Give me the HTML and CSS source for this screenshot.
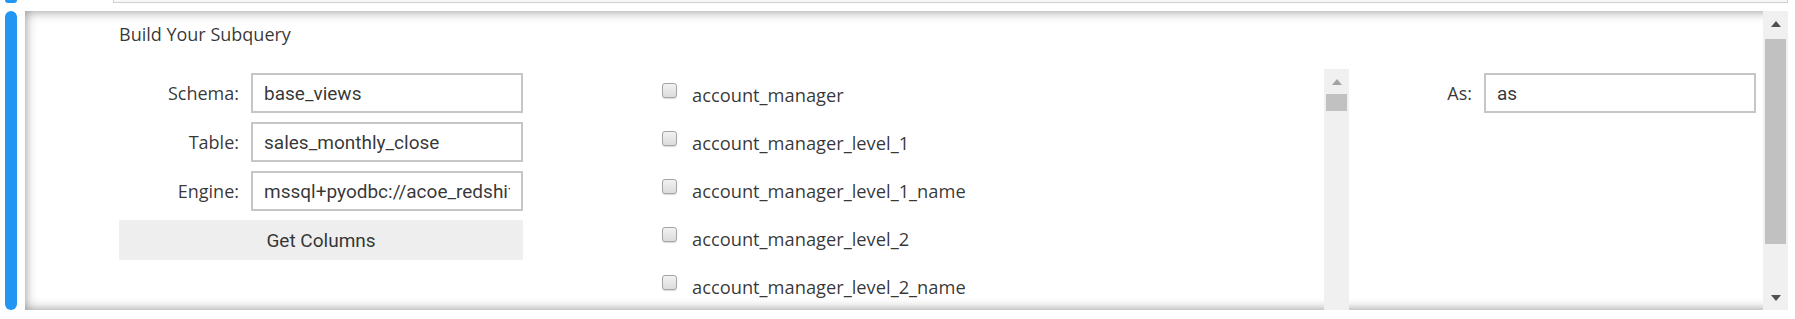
FILE: index.html
```html
<!DOCTYPE html>
<html lang="en">
<head>
    <meta charset="UTF-8">
    <title>Build Your Subquery</title>
    <link rel="stylesheet" href="styles.css">
</head>
<body>
    <div class="prev-cell">
        <div class="prev-bar"></div>
        <div class="prev-input"></div>
    </div>

    <div class="cell">
        <div class="cell-bar"></div>
        <div class="output-scroll">
            <div class="output-body">
                <div class="title">Build Your Subquery</div>
                <div class="builder">
                    <div class="source">
                        <div class="field">
                            <label class="field-label">Schema:</label>
                            <input type="text" class="field-input" value="base_views">
                        </div>
                        <div class="field">
                            <label class="field-label">Table:</label>
                            <input type="text" class="field-input" value="sales_monthly_close">
                        </div>
                        <div class="field">
                            <label class="field-label">Engine:</label>
                            <input type="text" class="field-input" value="mssql+pyodbc://acoe_redshift">
                        </div>
                        <button class="get-columns">Get Columns</button>
                    </div>

                    <div class="columns">
                        <div class="column-list">
                            <label class="column-item"><input type="checkbox" class="column-check"><span>account_manager</span></label>
                            <label class="column-item"><input type="checkbox" class="column-check"><span>account_manager_level_1</span></label>
                            <label class="column-item"><input type="checkbox" class="column-check"><span>account_manager_level_1_name</span></label>
                            <label class="column-item"><input type="checkbox" class="column-check"><span>account_manager_level_2</span></label>
                            <label class="column-item"><input type="checkbox" class="column-check"><span>account_manager_level_2_name</span></label>
                        </div>
                        <div class="scrollbar">
                            <div class="scroll-btn"><span class="arrow-up arrow-dim"></span></div>
                            <div class="scroll-thumb thumb-small"></div>
                        </div>
                    </div>

                    <div class="alias">
                        <label class="field-label alias-label">As:</label>
                        <input type="text" class="field-input" value="as">
                    </div>
                </div>
            </div>

            <div class="scrollbar">
                <div class="scroll-btn"><span class="arrow-up"></span></div>
                <div class="scroll-thumb thumb-page"></div>
                <div class="scroll-space"></div>
                <div class="scroll-btn"><span class="arrow-down"></span></div>
            </div>
        </div>
    </div>
</body>
</html>
```

FILE: styles.css
```css
body {
    margin: 0;
    width: 1795px;
    height: 319px;
    overflow: hidden;
    background: #fff;
    font-family: "Open Sans", sans-serif;
    color: rgba(0, 0, 0, 0.8);
}
.prev-cell {
    display: flex;
    height: 3px;
}
.prev-bar {
    margin-left: 5px;
    width: 12px;
    background: #2196f3;
    border-radius: 0 0 3px 3px;
}
.prev-input {
    margin-left: 96px;
    width: 1675px;
    box-sizing: border-box;
    background: #f7f7f7;
    border: 1px solid #d0d0d0;
    border-top: none;
}
.cell {
    display: flex;
    margin-top: 8px;
    height: 299px;
}
.cell-bar {
    margin-left: 5px;
    width: 12px;
    background: #2196f3;
    border-radius: 6px;
}
.output-scroll {
    margin-left: 8px;
    width: 1763px;
    display: flex;
    overflow: hidden;
    box-shadow: inset 0 0 12px rgba(0, 0, 0, 0.45);
}
.output-body {
    flex: 1;
    min-width: 0;
    padding: 9px 7px 0 94px;
}
.title {
    font-size: 18px;
    line-height: 28px;
}
.builder {
    display: flex;
    align-items: flex-start;
    margin-top: 21px;
}
.source {
    width: 404px;
    display: flex;
    flex-direction: column;
    gap: 9px;
    padding-top: 4px;
}
.field {
    display: flex;
    align-items: center;
    height: 40px;
}
.field-label {
    width: 120px;
    margin-right: 12px;
    text-align: right;
    font-size: 18px;
}
.field-input {
    width: 272px;
    height: 40px;
    box-sizing: border-box;
    margin: 0;
    padding: 0 11px;
    border: 2px solid #c6c6c6;
    font-family: Roboto, sans-serif;
    font-size: 19px;
    color: rgba(0, 0, 0, 0.8);
    outline: none;
}
.get-columns {
    height: 40px;
    border: none;
    border-radius: 2px;
    background: #eeeeee;
    font-family: Roboto, sans-serif;
    font-size: 19px;
    color: rgba(0, 0, 0, 0.8);
}
.columns {
    margin-left: 127px;
    width: 699px;
    height: 260px;
    display: flex;
}
.column-list {
    flex: 1;
    display: flex;
    flex-direction: column;
    gap: 6px;
}
.column-item {
    height: 42px;
    box-sizing: border-box;
    display: flex;
    align-items: center;
    padding: 9px 0 0 12px;
    font-size: 18.3px;
}
.column-check {
    appearance: none;
    margin: 0 15px 8px 0;
    width: 15px;
    height: 15px;
    box-sizing: border-box;
    border: 1px solid #a3a3a3;
    border-radius: 3px;
    background: linear-gradient(#f2f2f2, #dcdcdc);
    box-shadow: 0 1px 1px rgba(0, 0, 0, 0.15);
}
.alias {
    flex: 1;
    display: flex;
    justify-content: flex-end;
    align-items: center;
    padding-top: 4px;
}
.alias-label {
    width: auto;
}
.scrollbar {
    width: 25px;
    flex-shrink: 0;
    background: #f0f0f0;
    display: flex;
    flex-direction: column;
    align-items: center;
}
.scroll-btn {
    width: 100%;
    height: 25px;
    display: flex;
    align-items: center;
    justify-content: center;
}
.arrow-up {
    border-left: 5.5px solid transparent;
    border-right: 5.5px solid transparent;
    border-bottom: 6px solid #505050;
}
.arrow-down {
    border-left: 5.5px solid transparent;
    border-right: 5.5px solid transparent;
    border-top: 6px solid #505050;
}
.arrow-dim {
    border-bottom-color: #a3a3a3;
}
.scroll-thumb {
    width: 21px;
    background: #c1c1c1;
}
.thumb-small {
    height: 17px;
}
.thumb-page {
    margin-top: 3px;
    height: 205px;
}
.scroll-space {
    flex: 1;
}
```
